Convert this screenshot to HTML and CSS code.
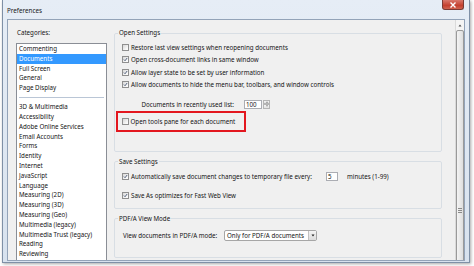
FILE: index.html
```html
<!DOCTYPE html>
<html>
<head>
<meta charset="utf-8">
<title>Preferences</title>
<link rel="stylesheet" href="styles.css">
</head>
<body>
<div class="window">
  <div class="titlebar">
    <span class="title">Preferences</span>
    <span class="close"><svg width="8" height="6" viewBox="0 0 8 6"><path d="M1.5 0.5 L6.5 5.5 M6.5 0.5 L1.5 5.5" stroke="#fff" stroke-width="1.4"/></svg></span>
  </div>
  <div class="client">
    <div class="cats">
      <div class="cats-label">Categories:</div>
      <ul class="listbox">
        <li>Commenting</li>
        <li class="sel">Documents</li>
        <li>Full Screen</li>
        <li>General</li>
        <li>Page Display</li>
        <li class="sep"></li>
        <li>3D &amp; Multimedia</li>
        <li>Accessibility</li>
        <li>Adobe Online Services</li>
        <li>Email Accounts</li>
        <li>Forms</li>
        <li>Identity</li>
        <li>Internet</li>
        <li>JavaScript</li>
        <li>Language</li>
        <li>Measuring (2D)</li>
        <li>Measuring (3D)</li>
        <li>Measuring (Geo)</li>
        <li>Multimedia (legacy)</li>
        <li>Multimedia Trust (legacy)</li>
        <li>Reading</li>
        <li>Reviewing</li>
      </ul>
    </div>
    <div class="panel">
      <div class="panel-body">
        <fieldset class="group g-open">
          <legend>Open Settings</legend>
          <div class="row"><span class="cb"></span>Restore last view settings when reopening documents</div>
          <div class="row"><span class="cb on"><svg viewBox="0 0 7 7"><path d="M1.3 3.6 L2.9 5.2 L5.8 1.4" fill="none" stroke="#2b3d5e" stroke-width="1.1"/></svg></span>Open cross-document links in same window</div>
          <div class="row"><span class="cb on"><svg viewBox="0 0 7 7"><path d="M1.3 3.6 L2.9 5.2 L5.8 1.4" fill="none" stroke="#2b3d5e" stroke-width="1.1"/></svg></span>Allow layer state to be set by user information</div>
          <div class="row"><span class="cb on"><svg viewBox="0 0 7 7"><path d="M1.3 3.6 L2.9 5.2 L5.8 1.4" fill="none" stroke="#2b3d5e" stroke-width="1.1"/></svg></span>Allow documents to hide the menu bar, toolbars, and window controls</div>
          <div class="row recent">
            <span class="recent-label">Documents in recently used list:</span>
            <span class="field num">100</span>
            <span class="spin"><span class="spin-btn"><svg viewBox="0 0 5 3"><path d="M0.8 2.4 L2.5 0.7 L4.2 2.4Z" fill="#555"/></svg></span><span class="spin-btn"><svg viewBox="0 0 5 3"><path d="M0.8 0.6 L2.5 2.3 L4.2 0.6Z" fill="#555"/></svg></span></span>
          </div>
          <div class="highlight"><span class="cb"></span>Open tools pane for each document</div>
        </fieldset>
        <fieldset class="group g-save">
          <legend>Save Settings</legend>
          <div class="row">
            <span class="cb on"><svg viewBox="0 0 7 7"><path d="M1.3 3.6 L2.9 5.2 L5.8 1.4" fill="none" stroke="#2b3d5e" stroke-width="1.1"/></svg></span>
            <span class="auto-label">Automatically save document changes to temporary file every:</span>
            <span class="field mins">5</span>
            <span class="mins-label">minutes (1-99)</span>
          </div>
          <div class="row fast"><span class="cb on"><svg viewBox="0 0 7 7"><path d="M1.3 3.6 L2.9 5.2 L5.8 1.4" fill="none" stroke="#2b3d5e" stroke-width="1.1"/></svg></span>Save As optimizes for Fast Web View</div>
        </fieldset>
        <fieldset class="group g-pdfa">
          <legend>PDF/A View Mode</legend>
          <div class="row pdfa">
            <span class="pdfa-label">View documents in PDF/A mode:</span>
            <span class="combo"><span class="combo-text">Only for PDF/A documents</span><span class="combo-btn"><svg viewBox="0 0 5 3"><path d="M0.6 0.4 L2.5 2.6 L4.4 0.4Z" fill="#222"/></svg></span></span>
          </div>
        </fieldset>
      </div>
      <div class="scrollbar">
        <div class="sb-up"><svg viewBox="0 0 5 3"><path d="M0.6 2.6 L2.5 0.4 L4.4 2.6Z" fill="#4a4a4a"/></svg></div>
        <div class="sb-thumb"><div class="grip"></div></div>
      </div>
    </div>
  </div>
</div>
</body>
</html>
```

FILE: styles.css
```css
* {
  box-sizing: border-box;
}

html, body {
  margin: 0;
  padding: 0;
}

body {
  width: 474px;
  height: 266px;
  overflow: hidden;
  background: #ffffff;
  font-family: "Noto Sans", "Open Sans", sans-serif;
  font-size: 6.2px;
  color: #141414;
}

.window {
  margin-left: 2px;
  width: 468px;
  height: 263px;
  border: 1px solid #7f90a6;
  border-top: none;
  background: linear-gradient(to bottom, #e6edf6, #d8e2ee);
  padding: 0 4px 1px 4px;
  display: flex;
  flex-direction: column;
  box-shadow: 1px 1px 3px rgba(0, 0, 0, 0.35);
}

.titlebar {
  height: 19px;
  display: flex;
  align-items: flex-start;
  flex: none;
}

.title {
  margin-top: 6px;
  line-height: 10px;
  color: #1a1a1a;
  font-size: 6.3px;
}

.close {
  margin-left: auto;
  margin-right: 1px;
  width: 22px;
  height: 10px;
  border: 1px solid #7a3a34;
  border-top: none;
  border-radius: 0 0 3px 3px;
  background: linear-gradient(to bottom, #d9786c, #c4402f 60%, #d0624f);
  display: flex;
  align-items: center;
  justify-content: center;
}

.close svg {
  display: block;
}

.client {
  flex: 1;
  min-height: 0;
  border: 1px solid #93a3b8;
  background: #f0f0f0;
  display: flex;
  overflow: hidden;
}

.cats {
  width: 99px;
  flex: none;
  padding: 8px 0 0 8px;
  display: flex;
  flex-direction: column;
}

.cats-label {
  line-height: 10px;
  height: 10px;
  padding-left: 1px;
  margin-bottom: 5px;
}

.listbox {
  list-style: none;
  margin: 0;
  padding: 0;
  flex: 1;
  background: #ffffff;
  border: 1px solid #8a8e96;
  border-bottom: none;
  overflow: hidden;
}

.listbox li {
  height: 9.8px;
  line-height: 9.8px;
  padding-left: 2px;
  white-space: nowrap;
}

.listbox li.sel {
  background: #3399ff;
  color: #ffffff;
}

.listbox li.sep {
  height: 9.2px;
  display: flex;
  align-items: center;
  padding: 0 2px;
}

.listbox li.sep::before {
  content: "";
  flex: 1;
  height: 1px;
  background: #bac6d6;
}

.panel {
  flex: 1;
  margin-left: 3px;
  display: flex;
  min-width: 0;
}

.panel-body {
  flex: 1;
  padding: 8px 13px 0 4px;
}

.group {
  margin: 0;
  border: 1px solid #d8dee4;
  border-radius: 2px;
  padding: 0 0 0 7px;
  min-width: 0;
}

.group legend {
  padding: 0 1px;
  margin-left: -4px;
  line-height: 10px;
  height: 10px;
}

.row {
  display: flex;
  align-items: center;
  height: 12.5px;
  white-space: nowrap;
}

.g-open {
  padding-top: 3px;
  padding-bottom: 19px;
}

.cb {
  width: 7px;
  height: 7px;
  flex: none;
  border: 1px solid #8f8f8f;
  background: linear-gradient(135deg, #d8d8d8, #f6f6f6 70%, #ffffff);
  margin-right: 2px;
  display: flex;
}

.cb svg {
  width: 5px;
  height: 5px;
  display: block;
}

.recent {
  height: 10px;
  margin-top: 8px;
}

.recent-label {
  width: 122px;
  text-align: right;
  padding-right: 10px;
}

.field {
  height: 9px;
  line-height: 7px;
  background: #ffffff;
  border: 1px solid #abadb3;
  padding-left: 1px;
}

.num {
  width: 18px;
}

.spin {
  margin-left: 1px;
  width: 7px;
  height: 9px;
  display: flex;
  flex-direction: column;
}

.spin-btn {
  flex: 1;
  border: 1px solid #b5b5b5;
  background: linear-gradient(to bottom, #f6f6f6, #e2e2e2);
  display: flex;
  align-items: center;
  justify-content: center;
}

.spin-btn svg {
  width: 4px;
  height: 2px;
  display: block;
}

.highlight {
  margin: 2px 0 0 -6px;
  width: 130px;
  height: 21px;
  border: 2.5px solid #e3171f;
  display: flex;
  align-items: center;
  padding-left: 3.5px;
  white-space: nowrap;
}

.g-save {
  margin-top: 4.5px;
  padding-top: 3.5px;
  padding-bottom: 6px;
}

.auto-label {
  width: 195px;
}

.mins {
  width: 12px;
  height: 9px;
}

.mins-label {
  margin-left: 9px;
}

.fast {
  margin-top: 7px;
}

.g-pdfa {
  margin-top: 4.5px;
  padding-top: 6px;
  padding-bottom: 16px;
}

.pdfa {
  height: 11px;
}

.pdfa-label {
  width: 102px;
  padding-left: 1px;
}

.combo {
  width: 93px;
  height: 11px;
  border: 1px solid #a6a6a6;
  border-radius: 2px;
  background: #ffffff;
  display: flex;
  align-items: stretch;
}

.combo-text {
  flex: 1;
  line-height: 9px;
  padding-left: 2px;
}

.combo-btn {
  width: 8px;
  border-left: 1px solid #c2c2c2;
  background: linear-gradient(to bottom, #f4f4f4, #dcdcdc);
  display: flex;
  align-items: center;
  justify-content: center;
}

.combo-btn svg {
  width: 4px;
  height: 3px;
  display: block;
}

.scrollbar {
  width: 9px;
  flex: none;
  background: #eaeaea;
  border-left: 1px solid #dadada;
  display: flex;
  flex-direction: column;
}

.sb-up {
  height: 10px;
  flex: none;
  display: flex;
  align-items: center;
  justify-content: center;
  background: #f4f4f4;
}

.sb-up svg {
  width: 4px;
  height: 3px;
  display: block;
}

.sb-thumb {
  height: 360px;
  flex: none;
  border: 1px solid #9a9a9a;
  border-radius: 2px;
  background: linear-gradient(to right, #f4f4f4, #dedede);
  padding-top: 177px;
  display: flex;
  justify-content: center;
}

.grip {
  width: 4px;
  height: 6px;
  background: repeating-linear-gradient(to bottom, #8a8a8a 0, #8a8a8a 1px, transparent 1px, transparent 2px);
}
```
